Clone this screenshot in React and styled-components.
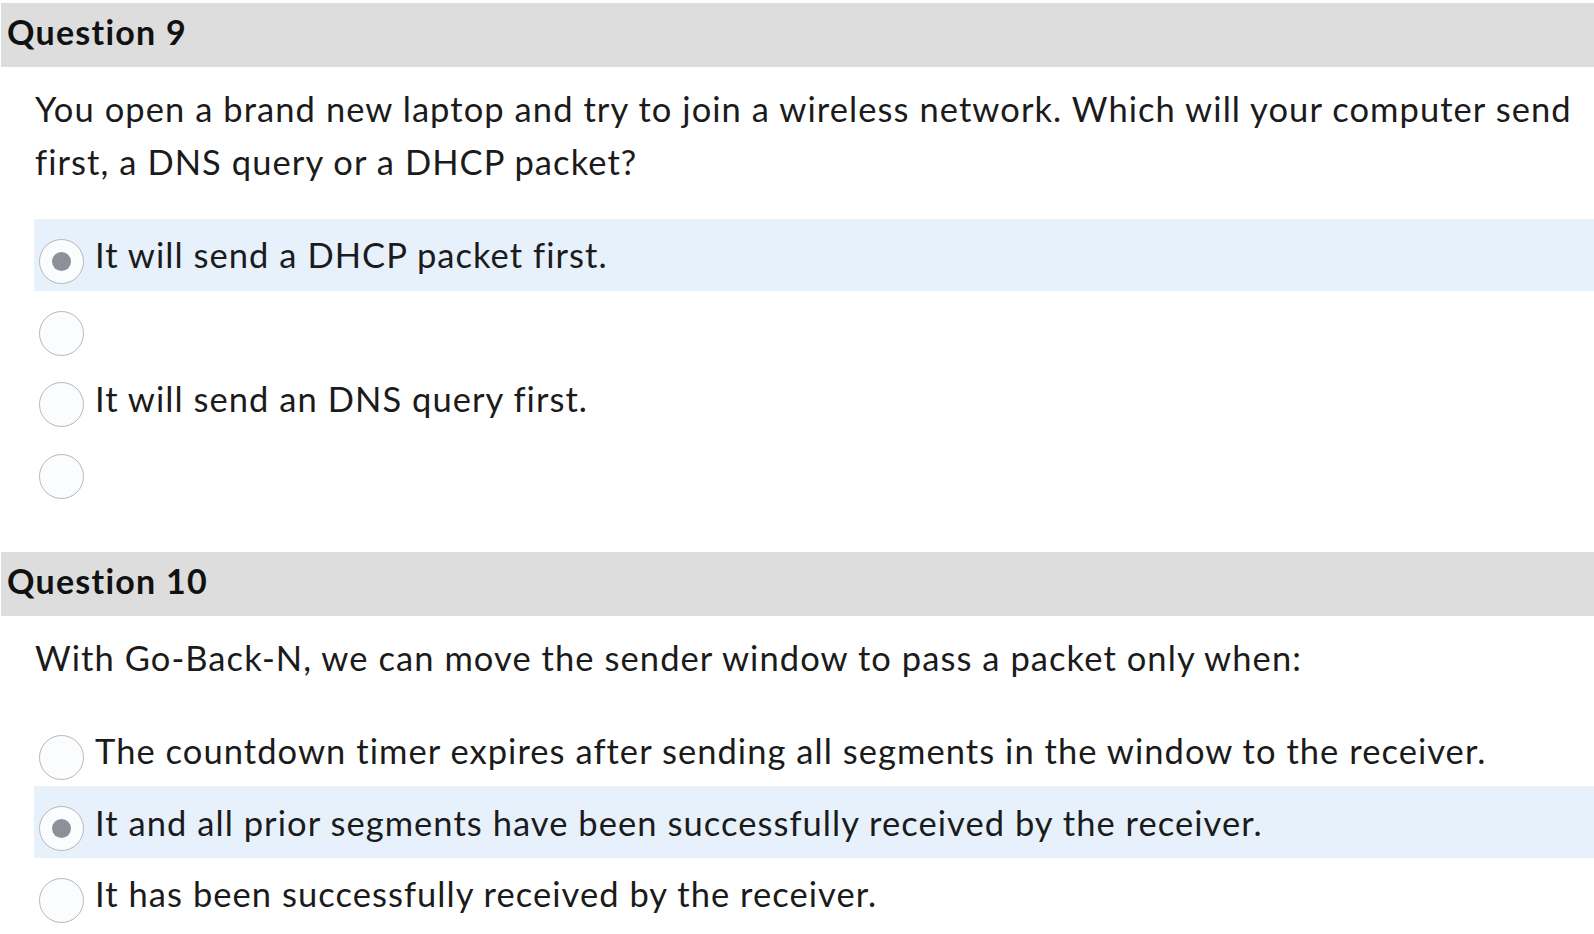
import React from "react";
import styled, { createGlobalStyle } from "styled-components";

const GlobalStyle = createGlobalStyle`
  body {
    margin: 0;
    background: #ffffff;
    font-family: Lato, "Open Sans", sans-serif;
    font-variant-ligatures: none;
    color: #1b1b1b;
  }
`;

const Page = styled.div`
  padding: 3px 0 0 1px;
`;

const Question = styled.section`
  margin-bottom: ${props => props.gap || 0}px;
`;

const Header = styled.div`
  height: 64px;
  display: flex;
  align-items: center;
  padding: 0 0 7px 6px;
  box-sizing: border-box;
  background: #dddddd;
  font-size: 34px;
  font-weight: bold;
  letter-spacing: 1.25px;
  color: #111111;
`;

const Body = styled.div`
  padding: 15px 0 0 33px;
`;

const Text = styled.p`
  margin: 0 0 31px 1px;
  font-size: 34.5px;
  letter-spacing: 1.07px;
  line-height: 53px;
`;

const Answers = styled.div`
  display: flex;
  flex-direction: column;
`;

const Row = styled.label`
  height: 71.7px;
  display: flex;
  align-items: center;
  gap: 11px;
  padding-left: 5px;
  background: ${props => (props.selected ? "#e7f1fb" : "transparent")};
  font-size: 34.5px;
  letter-spacing: 1.05px;
`;

const Radio = styled.span`
  width: 43px;
  height: 43px;
  margin-top: 13px;
  flex-shrink: 0;
  display: flex;
  align-items: center;
  justify-content: center;
  border: 1px solid #b8b8b8;
  border-radius: 50%;
  background: #fbfcfe;
  &::after {
    content: "";
    display: ${props => (props.selected ? "block" : "none")};
    width: 19px;
    height: 19px;
    border-radius: 50%;
    background: #8c9097;
  }
`;

const questions = [
  {
    title: "Question 9",
    text: "You open a brand new laptop and try to join a wireless network. Which will your computer send first, a DNS query or a DHCP packet?",
    answers: [
      { label: "It will send a DHCP packet first.", selected: true },
      { label: "" },
      { label: "It will send an DNS query first." },
      { label: "" }
    ],
    gap: 46
  },
  {
    title: "Question 10",
    text: "With Go-Back-N, we can move the sender window to pass a packet only when:",
    answers: [
      { label: "The countdown timer expires after sending all segments in the window to the receiver." },
      { label: "It and all prior segments have been successfully received by the receiver.", selected: true },
      { label: "It has been successfully received by the receiver." }
    ]
  }
];

const App = () => (
  <>
    <GlobalStyle />
    <Page>
      {questions.map(q => (
        <Question key={q.title} gap={q.gap}>
          <Header>{q.title}</Header>
          <Body>
            <Text>{q.text}</Text>
            <Answers>
              {q.answers.map((a, i) => (
                <Row key={i} selected={a.selected}>
                  <Radio selected={a.selected} />
                  <span>{a.label}</span>
                </Row>
              ))}
            </Answers>
          </Body>
        </Question>
      ))}
    </Page>
  </>
);

export default App;
